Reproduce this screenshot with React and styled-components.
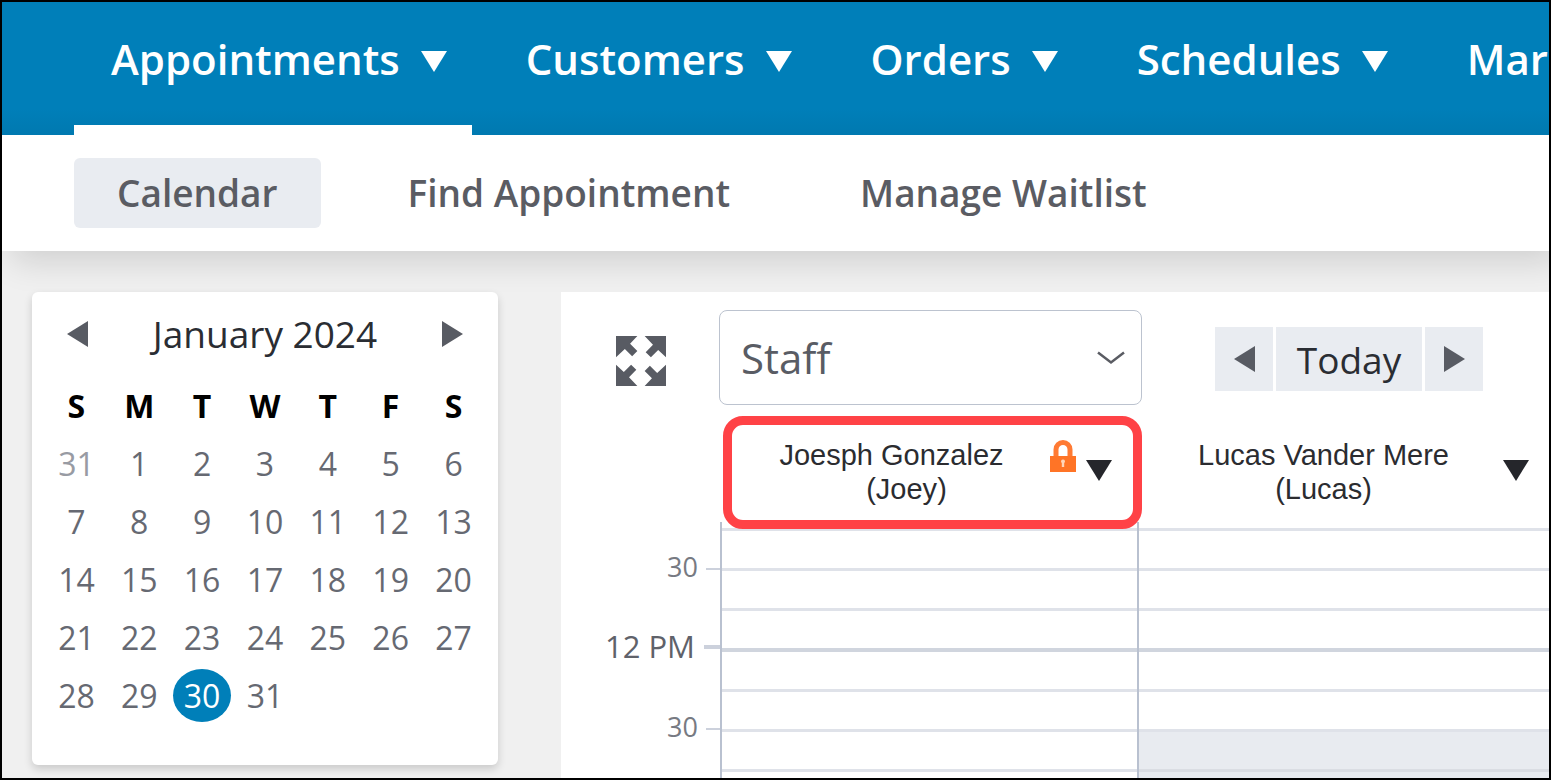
import React from 'react';
import styled, { createGlobalStyle } from 'styled-components';

const GlobalStyle = createGlobalStyle`
  *, *::before, *::after {
    box-sizing: border-box;
  }

  body {
    margin: 0;
    font-family: 'Open Sans', sans-serif;
    color: #55575f;
  }

  button, select {
    margin: 0;
    padding: 0;
    border: 0;
    background: none;
    color: inherit;
    font: inherit;
    cursor: pointer;
  }
`;

const Frame = styled.div`
  display: flex;
  flex-direction: column;
  height: 100vh;
  overflow: hidden;
  border: 2px solid #000;
  background: #f0f0f0;
`;

const MainNav = styled.nav`
  position: relative;
  z-index: 1;
  display: flex;
  flex: none;
  gap: 17px;
  height: 133px;
  padding-left: 72px;
  background: linear-gradient(#007fb9 80%, #0079b0);
`;

const NavItem = styled.button`
  display: flex;
  flex: none;
  align-items: center;
  gap: 21px;
  padding: 0 25px 10px 37px;
  border-bottom: 10px solid ${props => (props.$active ? '#fff' : 'transparent')};
  color: #fff;
  font-size: 42px;
  font-weight: 600;
  line-height: 56px;

  svg {
    margin-top: 6px;
  }
`;

const SubNav = styled.nav`
  position: relative;
  display: flex;
  flex: none;
  align-items: center;
  gap: 44px;
  height: 116px;
  padding-left: 72px;
  background: #fff;
  box-shadow: 10px 10px 32px rgba(0, 0, 0, 0.14);
`;

const SubLink = styled.a`
  padding: 9px 43px;
  border-radius: 6px;
  background: ${props => (props.$active ? '#e9ecf1' : 'transparent')};
  color: #5a5c63;
  font-size: 37px;
  font-weight: 600;
  line-height: 52px;
  text-decoration: none;
`;

const Content = styled.main`
  display: flex;
  flex: 1;
  align-items: flex-start;
  gap: 63px;
  min-height: 0;
  padding: 41px 0 0 30px;
`;

const MonthCard = styled.section`
  position: relative;
  flex: none;
  width: 466px;
  padding: 0 13px 41px;
  border-radius: 6px;
  background: #fff;
  box-shadow: 0 4px 8px rgba(0, 0, 0, 0.16);
`;

const MonthHeader = styled.header`
  display: flex;
  align-items: center;
  justify-content: space-between;
  height: 84px;
  padding: 0 22px;
`;

const MonthTitle = styled.h2`
  margin: 0;
  color: #2a2d33;
  font-size: 37px;
  font-weight: 400;
  line-height: 52px;
`;

const IconButton = styled.button`
  display: flex;
  align-items: center;
  justify-content: center;
`;

const MonthTable = styled.table`
  width: 100%;
  border-collapse: collapse;
  table-layout: fixed;
`;

const WeekDay = styled.th`
  height: 58px;
  padding: 0;
  color: #000;
  font-size: 32px;
  font-weight: 700;
`;

const DayCell = styled.td`
  height: 58px;
  padding: 0;
  text-align: center;
`;

const Day = styled.button`
  width: 58px;
  height: 53px;
  border-radius: 50%;
  background: ${props => (props.$selected ? '#007fb9' : 'transparent')};
  color: ${props => (props.$selected ? '#fff' : props.$muted ? '#989ba3' : '#666972')};
  font-size: 32px;
  line-height: 53px;
`;

const Schedule = styled.section`
  position: relative;
  flex: 1;
  align-self: stretch;
  min-width: 0;
  overflow: hidden;
  background: #fff;
`;

const Toolbar = styled.div`
  display: flex;
  align-items: center;
  padding: 18px 0 0 55px;
`;

const ExpandButton = styled(IconButton)`
  padding-top: 6px;
`;

const SelectBox = styled.label`
  display: grid;
  flex: none;
  align-items: center;
  width: 423px;
  height: 95px;
  margin: 0 73px 0 53px;
  border: 1px solid #bcc3cf;
  border-radius: 8px;

  svg {
    grid-area: 1 / 1;
    justify-self: end;
    margin-right: 16px;
    pointer-events: none;
  }
`;

const Select = styled.select`
  grid-area: 1 / 1;
  width: 100%;
  height: 100%;
  padding: 0 21px;
  appearance: none;
  color: #595c64;
  font-size: 42px;
`;

const DateNav = styled.div`
  display: flex;
  gap: 3px;
  padding-top: 3px;
`;

const DateButton = styled.button`
  display: flex;
  flex: none;
  align-items: center;
  justify-content: center;
  width: ${props => (props.$wide ? '146px' : '58px')};
  height: 64px;
  background: #e9ecf1;
  color: #2a2d33;
  font-size: 37px;
`;

const DayGrid = styled.div`
  display: flex;
`;

const Gutter = styled.div`
  flex: none;
  width: 159px;
  padding-top: 121px;
`;

const TimeLabel = styled.div`
  display: flex;
  align-items: center;
  justify-content: flex-end;
  gap: ${props => (props.$hour ? '9px' : '8px')};
  height: 80px;
  color: ${props => (props.$hour ? '#5f626a' : '#777a82')};
  font-size: ${props => (props.$hour ? '31px' : '27px')};

  &::after {
    content: '';
    width: ${props => (props.$hour ? '16px' : '14px')};
    height: ${props => (props.$hour ? '4px' : '2px')};
    margin-top: ${props => (props.$hour ? '2px' : '6px')};
    background: #ccd1dc;
  }
`;

const Column = styled.div`
  flex: none;
  width: 417px;
`;

const ColumnHead = styled.header`
  position: relative;
  display: flex;
  align-items: flex-start;
  height: 117px;
  padding: 33px 25px 0 7px;
  color: #2b2c30;
  font-family: 'Liberation Sans', sans-serif;
  font-size: 29px;
  line-height: 34px;
  text-align: center;
`;

const StaffName = styled.div`
  flex: 1;
`;

const NameLine = styled.div`
  display: flex;

  span {
    flex: 1;
  }

  svg {
    margin: 2px 10px 0 -6px;
  }
`;

const StaffMenu = styled(IconButton)`
  height: 64px;
`;

const Highlight = styled.div`
  position: absolute;
  top: 11px;
  left: 3px;
  width: 419px;
  height: 113px;
  border: 9px solid #ff4246;
  border-radius: 20px;
  pointer-events: none;
`;

const Slots = styled.div`
  border-left: 2px solid #b9c1d0;
`;

const Slot = styled.div`
  height: ${props => (props.$partial ? '9px' : '40px')};
  border-bottom: 3px solid #dfe2e9;
  background: ${props => (props.$closed ? '#e8ebf0' : 'transparent')};

  ${props => props.$hour && `
    height: 41px;
    border-bottom: 4px solid #d0d5de;
  `}

  ${props => props.$closed && `
    border-bottom-color: #dadde3;
  `}
`;

const Triangle = ({ direction = 'down', color }) => {
  const down = direction === 'down';
  const points = {
    down: '0,0 26,0 13,21',
    left: '21,0 21,26 0,13',
    right: '0,0 21,13 0,26',
  };
  return (
    <svg
      width={down ? 26 : 21}
      height={down ? 21 : 26}
      fill={color || 'currentColor'}
      aria-hidden="true"
    >
      <polygon points={points[direction]} />
    </svg>
  );
};

const ExpandIcon = () =>
  <svg width="50" height="50" viewBox="0 0 48 48" fill="#585b63" aria-hidden="true">
    {[0, 90, 180, 270].map(angle =>
      <path
        key={angle}
        transform={`rotate(${angle} 24 24)`}
        d="M0 0H20.500L13.500 7.500L20.500 14.500L15.500 19.500L8.500 12.500L0 20.500Z"
      />
    )}
  </svg>;

const ChevronIcon = () =>
  <svg width="28" height="14" fill="none" stroke="#5a5c63" strokeWidth="2.5" aria-hidden="true">
    <path d="M1 1.500L14 11.500L27 1.500" />
  </svg>;

const LockIcon = () =>
  <svg width="26" height="32" viewBox="0 0 26 32" aria-hidden="true">
    <path d="M6 17V9.500a7 7 0 0 1 14 0V17" fill="none" stroke="#ff7a33" strokeWidth="5" />
    <path d="M0 16H26V32H0Z" fill="#ff7426" />
    <path d="M13 19.500a2 2 0 0 1 1.200 3.600V27H11.800V23.100A2 2 0 0 1 13 19.500Z" fill="#ffd5b8" />
  </svg>;

const menus = ['Appointments', 'Customers', 'Orders', 'Schedules', 'Mar'];
const pages = ['Calendar', 'Find Appointment', 'Manage Waitlist'];
const weekDays = ['S', 'M', 'T', 'W', 'T', 'F', 'S'];
const selectedDay = 30;

// The first cell belongs to the previous month
const days = [31, ...Array.from({ length: 31 }, (_, i) => i + 1)];
const weeks = [0, 7, 14, 21, 28].map(start => days.slice(start, start + 7));

const times = [
  { label: '30' },
  { label: '12 PM', hour: true },
  { label: '30' },
];

const staff = [
  { name: 'Joesph Gonzalez', nick: 'Joey', locked: true, closedFrom: 99 },
  { name: 'Lucas Vander Mere', nick: 'Lucas', locked: false, closedFrom: 6 },
];

const MonthPicker = () =>
  <MonthCard>
    <MonthHeader>
      <IconButton aria-label="Previous month">
        <Triangle direction="left" color="#585b63" />
      </IconButton>
      <MonthTitle>January 2024</MonthTitle>
      <IconButton aria-label="Next month">
        <Triangle direction="right" color="#585b63" />
      </IconButton>
    </MonthHeader>
    <MonthTable>
      <thead>
        <tr>{weekDays.map((day, i) => <WeekDay key={i} scope="col">{day}</WeekDay>)}</tr>
      </thead>
      <tbody>
        {weeks.map((week, row) =>
          <tr key={row}>
            {week.map((day, i) =>
              <DayCell key={i}>
                <Day $muted={row === 0 && i === 0} $selected={day === selectedDay}>{day}</Day>
              </DayCell>
            )}
          </tr>
        )}
      </tbody>
    </MonthTable>
  </MonthCard>;

const StaffColumn = ({ name, nick, locked, closedFrom }) =>
  <Column>
    <ColumnHead>
      <StaffName>
        <NameLine>
          <span>{name}</span>
          {locked && <LockIcon />}
        </NameLine>
        ({nick})
      </StaffName>
      <StaffMenu aria-label={`${name} options`}>
        <Triangle color="#25262b" />
      </StaffMenu>
      {locked && <Highlight />}
    </ColumnHead>
    <Slots>
      {[0, 1, 2, 3, 4, 5, 6, 7].map(i =>
        <Slot key={i} $partial={i === 0} $hour={i === 3} $closed={i >= closedFrom} />
      )}
    </Slots>
  </Column>;

const App = () =>
  <Frame>
    <GlobalStyle />
    <MainNav>
      {menus.map((menu, i) =>
        <NavItem key={menu} $active={i === 0}>
          {menu}
          <Triangle />
        </NavItem>
      )}
    </MainNav>
    <SubNav>
      {pages.map((page, i) => <SubLink key={page} href="#" $active={i === 0}>{page}</SubLink>)}
    </SubNav>
    <Content>
      <MonthPicker />
      <Schedule>
        <Toolbar>
          <ExpandButton aria-label="Full screen"><ExpandIcon /></ExpandButton>
          <SelectBox>
            <Select aria-label="View by" defaultValue="Staff">
              <option>Staff</option>
            </Select>
            <ChevronIcon />
          </SelectBox>
          <DateNav>
            <DateButton aria-label="Previous day"><Triangle direction="left" color="#585b63" /></DateButton>
            <DateButton $wide>Today</DateButton>
            <DateButton aria-label="Next day"><Triangle direction="right" color="#585b63" /></DateButton>
          </DateNav>
        </Toolbar>
        <DayGrid>
          <Gutter>
            {times.map((time, i) => <TimeLabel key={i} $hour={time.hour}>{time.label}</TimeLabel>)}
          </Gutter>
          {staff.map(person => <StaffColumn key={person.name} {...person} />)}
        </DayGrid>
      </Schedule>
    </Content>
  </Frame>;

export default App;
